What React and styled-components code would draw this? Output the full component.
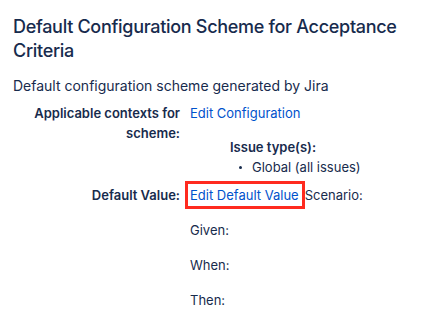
import React from 'react';
import styled, {createGlobalStyle} from 'styled-components';

const GlobalStyle = createGlobalStyle`
  html, body {
    margin: 0;
    background: #ffffff;
  }
  body {
    font-family: Inter, "Liberation Sans", Arial, sans-serif;
    font-size: 14px;
    line-height: 20px;
    color: #172B4D;
  }
`;

const App = () => {

    return (
        <Page>
            <GlobalStyle/>
            <Title>Default Configuration Scheme for Acceptance Criteria</Title>
            <Description>Default configuration scheme generated by Jira</Description>
            <Fields>
                <Label>Applicable contexts for scheme:</Label>
                <Value>
                    <Link href="#">Edit Configuration</Link>
                    <Contexts>
                        <SubTitle>Issue type(s):</SubTitle>
                        <Bullets>
                            <li>Global (all issues)</li>
                        </Bullets>
                    </Contexts>
                </Value>

                <Label>Default Value:</Label>
                <Value>
                    <Lines>
                        <div>
                            <Highlight><Link href="#">Edit Default Value</Link></Highlight>Scenario:
                        </div>
                        <div>Given:</div>
                        <div>When:</div>
                        <div>Then:</div>
                    </Lines>
                </Value>
            </Fields>
        </Page>
    )
}

const Page = styled.div`
  padding: 15px 13px 0;
  width: 432px;
  height: 310px;
  box-sizing: border-box;
  overflow: hidden;
`;

const Title = styled.h2`
  margin: 0;
  font-size: 18px;
  line-height: 24px;
  font-weight: 500;
  letter-spacing: -0.3px;
  color: #172B4D;
`;

const Description = styled.p`
  margin: 13px 0 0;
`;

const Fields = styled.div`
  display: grid;
  grid-template-columns: 167px 1fr;
  column-gap: 10px;
  row-gap: 8px;
  margin-top: 7px;
  font-size: 13px;
`;

const Label = styled.div`
  text-align: right;
  font-weight: 600;
`;

const Value = styled.div`
`;

const Link = styled.a`
  color: #0052CC;
  text-decoration: none;
`;

const Contexts = styled.div`
  margin: 14px 0 0 40px;
`;

const SubTitle = styled.div`
  font-weight: 600;
`;

const Bullets = styled.ul`
  margin: 0;
  padding-left: 22px;
  list-style: none;

  li {
    position: relative;
  }

  li::before {
    content: "";
    position: absolute;
    left: -13px;
    top: 9px;
    width: 3px;
    height: 3px;
    border-radius: 50%;
    background: #172B4D;
  }
`;

const Lines = styled.div`
  display: flex;
  flex-direction: column;
  gap: 15px;
`;

const Highlight = styled.span`
  border: 3px solid #FF2A1F;
  padding: 3px 3px 3px 2px;
  margin-left: -5px;
`;

export default App;
